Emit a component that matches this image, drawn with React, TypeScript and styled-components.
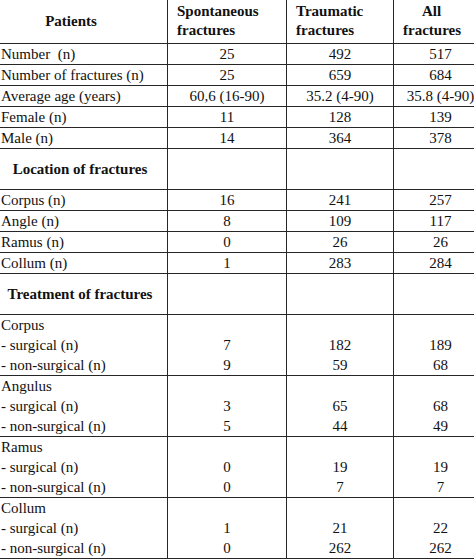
import { createGlobalStyle } from 'styled-components';
import styled from 'styled-components';

const GlobalStyle = createGlobalStyle`
  html, body {
    margin: 0;
    padding: 0;
    background: #ffffff;
    overflow: hidden;
  }
`;

const Page = styled.div`
  width: 474px;
  height: 559px;
  overflow: hidden;
  background: #ffffff;
`;

const Table = styled.table`
  border-collapse: collapse;
  table-layout: fixed;
  width: 495px;
  margin-left: -8px;
  font-family: "Liberation Serif", "Times New Roman", Times, serif;
  font-size: 15px;
  line-height: 20px;
  color: #111;
`;

const Col = styled.col<{ $w: number }>`
  width: ${(p) => p.$w}px;
`;

const Row = styled.tr<{ $h: number }>`
  height: ${(p) => p.$h}px;
`;

const HeadCell = styled.th<{ $align?: 'left' | 'center'; $pad?: string }>`
  border: 1px solid #262626;
  border-top: none;
  padding: ${(p) => p.$pad ?? '0 9px'};
  font-weight: bold;
  line-height: 19px;
  text-align: ${(p) => p.$align ?? 'left'};
  vertical-align: middle;
`;

const SectionCell = styled.td`
  border: 1px solid #262626;
  padding: 0 9px;
  font-weight: bold;
  text-align: center;
  vertical-align: middle;
`;

const LabelCell = styled.td`
  border: 1px solid #262626;
  padding: 0 0 0 8px;
  text-align: left;
  vertical-align: top;
  white-space: pre;
`;

const ValueCell = styled.td`
  border: 1px solid #262626;
  padding: 0;
  text-align: center;
  vertical-align: top;
  white-space: nowrap;
`;

const Line = styled.div`
  height: 20px;
  line-height: 20px;
`;

type Simple = { label: string; values: [string, string, string] };
type Group = { label: string; values: [[string, string], [string, string], [string, string]] };

const patients: Simple[] = [
  { label: 'Number  (n)', values: ['25', '492', '517'] },
  { label: 'Number of fractures (n)', values: ['25', '659', '684'] },
  { label: 'Average age (years)', values: ['60,6 (16-90)', '35.2 (4-90)', '35.8 (4-90)'] },
  { label: 'Female (n)', values: ['11', '128', '139'] },
  { label: 'Male (n)', values: ['14', '364', '378'] },
];

const locations: Simple[] = [
  { label: 'Corpus (n)', values: ['16', '241', '257'] },
  { label: 'Angle (n)', values: ['8', '109', '117'] },
  { label: 'Ramus (n)', values: ['0', '26', '26'] },
  { label: 'Collum (n)', values: ['1', '283', '284'] },
];

const treatments: Group[] = [
  { label: 'Corpus', values: [['7', '9'], ['182', '59'], ['189', '68']] },
  { label: 'Angulus', values: [['3', '5'], ['65', '44'], ['68', '49']] },
  { label: 'Ramus', values: [['0', '0'], ['19', '7'], ['19', '7']] },
  { label: 'Collum', values: [['1', '0'], ['21', '262'], ['22', '262']] },
];

const SimpleRow = ({ row }: { row: Simple }) => (
  <Row $h={21}>
    <LabelCell>{row.label}</LabelCell>
    {row.values.map((v, i) => (
      <ValueCell key={i}>{v}</ValueCell>
    ))}
  </Row>
);

const SectionRow = ({ title }: { title: string }) => (
  <Row $h={41}>
    <SectionCell>{title}</SectionCell>
    <ValueCell />
    <ValueCell />
    <ValueCell />
  </Row>
);

const GroupRow = ({ row }: { row: Group }) => (
  <Row $h={61}>
    <LabelCell>
      <Line>{row.label}</Line>
      <Line>- surgical (n)</Line>
      <Line>- non-surgical (n)</Line>
    </LabelCell>
    {row.values.map((pair, i) => (
      <ValueCell key={i}>
        <Line>&nbsp;</Line>
        <Line>{pair[0]}</Line>
        <Line>{pair[1]}</Line>
      </ValueCell>
    ))}
  </Row>
);

export default function App() {
  return (
    <Page>
      <GlobalStyle />
      <Table>
        <colgroup>
          <Col $w={175} />
          <Col $w={119} />
          <Col $w={107} />
          <Col $w={94} />
        </colgroup>
        <thead>
          <Row $h={43}>
            <HeadCell $align="center" $pad="0 18px 0 0">Patients</HeadCell>
            <HeadCell>
              Spontaneous
              <br />
              fractures
            </HeadCell>
            <HeadCell>
              Traumatic
              <br />
              fractures
            </HeadCell>
            <HeadCell $align="center" $pad="0 27px 0 9px">
              All
              <br />
              fractures
            </HeadCell>
          </Row>
        </thead>
        <tbody>
          {patients.map((r) => (
            <SimpleRow key={r.label} row={r} />
          ))}
          <SectionRow title="Location of fractures" />
          {locations.map((r) => (
            <SimpleRow key={r.label} row={r} />
          ))}
          <SectionRow title="Treatment of fractures" />
          {treatments.map((r) => (
            <GroupRow key={r.label} row={r} />
          ))}
        </tbody>
      </Table>
    </Page>
  );
}
